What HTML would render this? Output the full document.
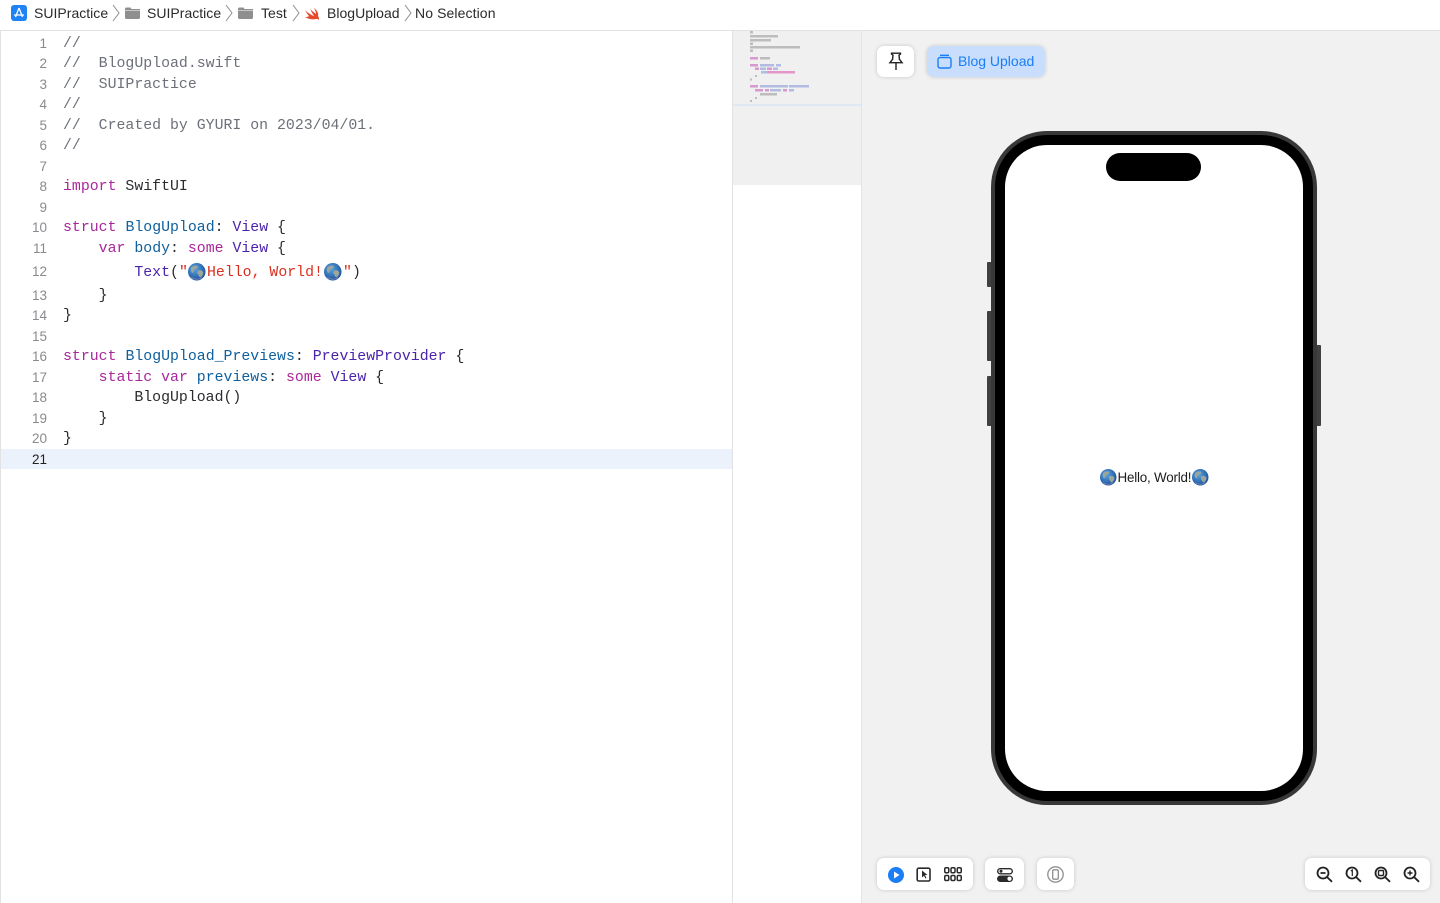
<!DOCTYPE html>
<html><head><meta charset="utf-8"><style>
html,body{margin:0;padding:0;width:1440px;height:903px;overflow:hidden;background:#fff}
body{position:relative;font-family:"Liberation Sans",sans-serif}
.a{position:absolute}
.bc{position:absolute;top:5px;font-size:14px;line-height:16px;color:#2a2a2a;white-space:nowrap;letter-spacing:.02px}
.ln{position:absolute;left:0;width:47px;text-align:right;font-size:13.5px;line-height:20px;color:#8b8b8f;margin-top:.6px}
.c{position:absolute;left:63px;font-family:"Liberation Mono",monospace;font-size:14.87px;line-height:20px;white-space:pre;color:#2c2c30}
.g{color:#6c7078}.k{color:#a9279a}.b{color:#0f5f9c}.v{color:#4a23ab}.r{color:#d8301f}
.btn{position:absolute;background:#fff;border-radius:7px;box-shadow:0 0 4px rgba(0,0,0,.17)}
svg{position:absolute;overflow:visible}
</style></head><body>
<svg width="0" height="0" style="position:absolute"><defs>
<radialGradient id="gl" cx=".4" cy=".35" r=".7"><stop offset="0" stop-color="#5ba6e2"/><stop offset="1" stop-color="#174c9a"/></radialGradient>
<g id="globe"><circle cx="8" cy="8" r="8" fill="url(#gl)"/><path d="M3 4c2-2 5-2 6-1 0 2-2 2-3 3s-1 3-2 3-2-3-1-5zM9 7c2-1 5 0 5 2s-2 4-3 4-1-2-2-3 0-2 0-3z" fill="#9aa79a"/><path d="M3 13c3 2.500 7 2.500 10 0" stroke="#6f80b0" fill="none"/></g>
</defs></svg>

<div class="a" style="left:0;top:0;width:1440px;height:30px;background:#fff;border-bottom:1px solid #e2e2e2"></div>
<div class="a" style="left:0;top:31px;width:1px;height:872px;background:#e2e2e2"></div>

<svg style="left:11px;top:5px" width="16" height="16" viewBox="0 0 16 16"><rect width="16" height="16" rx="3" fill="#1f82f5"/><path d="M8 3L4.500 12M8 3l3.500 9M3 10h10" stroke="#fff" stroke-width="1.300" fill="none"/></svg>
<div class="bc" style="left:34px">SUIPractice</div>
<svg style="left:112px;top:4px" width="8" height="18" viewBox="0 0 8 18"><path d="M1 1l6 8-6 8" stroke="#8d8d8d" fill="none"/></svg>
<svg style="left:125px;top:7px" width="15" height="12" viewBox="0 0 15 12"><path d="M0 2q0-1.500 1.500-1.500h4l1 1.500H15v8.500q0 1.500-1.500 1.500h-12Q0 12 0 10.500z" fill="#8f8f8f"/><rect y="3" width="15" height="1" fill="#c8c8c8"/></svg>
<div class="bc" style="left:147px">SUIPractice</div>
<svg style="left:225px;top:4px" width="8" height="18" viewBox="0 0 8 18"><path d="M1 1l6 8-6 8" stroke="#8d8d8d" fill="none"/></svg>
<svg style="left:238px;top:7px" width="15" height="12" viewBox="0 0 15 12"><path d="M0 2q0-1.500 1.500-1.500h4l1 1.500H15v8.500q0 1.500-1.500 1.500h-12Q0 12 0 10.500z" fill="#8f8f8f"/><rect y="3" width="15" height="1" fill="#c8c8c8"/></svg>
<div class="bc" style="left:261px">Test</div>
<svg style="left:292px;top:4px" width="8" height="18" viewBox="0 0 8 18"><path d="M1 1l6 8-6 8" stroke="#8d8d8d" fill="none"/></svg>
<svg style="left:305px;top:7px" width="15" height="14" viewBox="0 0 15 14"><path d="M0 3c3 3 6 5 9 6C7 6 6 4 5 2c2 2 5 4 6 5 0-2-1-4-2-6 3 2 5 6 4 8 1 1 1 3 1 4-1-1-2-1-3-1-3 1-8 0-11-2 1 0 3 0 4-1C3 8 1 5 0 3z" fill="#e5492f"/></svg>
<div class="bc" style="left:327px">BlogUpload</div>
<svg style="left:404px;top:4px" width="8" height="18" viewBox="0 0 8 18"><path d="M1 1l6 8-6 8" stroke="#8d8d8d" fill="none"/></svg>
<div class="bc" style="left:415px;letter-spacing:.1px">No Selection</div>

<div class="a" style="left:1px;top:449px;width:731px;height:20px;background:#ecf2fc"></div>

<div class="ln" style="top:33px">1</div><div class="c g" style="top:34px">//</div>
<div class="ln" style="top:53.500px">2</div><div class="c g" style="top:54px">//  BlogUpload.swift</div>
<div class="ln" style="top:74px">3</div><div class="c g" style="top:75px">//  SUIPractice</div>
<div class="ln" style="top:94.500px">4</div><div class="c g" style="top:95px">//</div>
<div class="ln" style="top:115px">5</div><div class="c g" style="top:116px">//  Created by GYURI on 2023/04/01.</div>
<div class="ln" style="top:135.500px">6</div><div class="c g" style="top:136px">//</div>
<div class="ln" style="top:156px">7</div>
<div class="ln" style="top:176.500px">8</div><div class="c" style="top:177px"><span class="k">import</span> SwiftUI</div>
<div class="ln" style="top:197px">9</div>
<div class="ln" style="top:217.500px">10</div><div class="c" style="top:218px"><span class="k">struct</span> <span class="b">BlogUpload</span>: <span class="v">View</span> {</div>
<div class="ln" style="top:238px">11</div><div class="c" style="top:239px">    <span class="k">var</span> <span class="b">body</span>: <span class="k">some</span> <span class="v">View</span> {</div>
<div class="ln" style="top:261px">12</div><div class="c" style="top:263px">        <span class="v">Text</span>(<span class="r">"</span></div>
<svg style="left:188px;top:263px" width="17.500" height="17.500" viewBox="0 0 16 16"><use href="#globe"/></svg>
<div class="c r" style="top:263px;left:207px">Hello, World!</div>
<svg style="left:324px;top:263px" width="17.500" height="17.500" viewBox="0 0 16 16"><use href="#globe"/></svg>
<div class="c r" style="top:263px;left:343px">"</div>
<div class="c" style="top:263px;left:352px">)</div>
<div class="ln" style="top:285px">13</div><div class="c" style="top:286px">    }</div>
<div class="ln" style="top:305.500px">14</div><div class="c" style="top:306px">}</div>
<div class="ln" style="top:326px">15</div>
<div class="ln" style="top:346.500px">16</div><div class="c" style="top:347px"><span class="k">struct</span> <span class="b">BlogUpload_Previews</span>: <span class="v">PreviewProvider</span> {</div>
<div class="ln" style="top:367px">17</div><div class="c" style="top:368px">    <span class="k">static</span> <span class="k">var</span> <span class="b">previews</span>: <span class="k">some</span> <span class="v">View</span> {</div>
<div class="ln" style="top:387.500px">18</div><div class="c" style="top:388px">        BlogUpload()</div>
<div class="ln" style="top:408px">19</div><div class="c" style="top:409px">    }</div>
<div class="ln" style="top:428.500px">20</div><div class="c" style="top:429px">}</div>
<div class="ln" style="top:449px;color:#222">21</div>

<!-- minimap -->
<div class="a" style="left:732px;top:31px;width:1px;height:872px;background:#e2e2e2"></div>
<div class="a" style="left:733px;top:31px;width:128px;height:154px;background:#f0f0f0"></div>
<div class="a" style="left:733px;top:104px;width:128px;height:2px;background:#dfe8f5"></div>
<svg style="left:745px;top:28px;filter:blur(.35px)" width="80" height="80">
<g fill="#bdbdbd">
<rect x="5" y="3" width="3" height="2.500"/><rect x="5" y="7" width="28" height="2.500"/><rect x="5" y="11" width="21" height="2.500"/><rect x="5" y="14.500" width="3" height="2.500"/><rect x="5" y="18" width="50" height="2.500"/><rect x="5" y="21.500" width="3" height="2.500"/>
<rect x="15" y="29" width="10" height="2.500"/><rect x="15" y="65" width="17" height="2.500"/>
<rect x="10" y="47" width="2" height="2"/><rect x="5" y="50.500" width="2" height="2"/><rect x="10" y="69" width="2" height="2"/><rect x="5" y="72" width="2" height="2"/>
</g>
<g fill="#d899cf">
<rect x="5" y="29" width="8" height="2.500"/><rect x="5" y="36" width="8" height="2.500"/><rect x="10" y="39.500" width="4" height="2.500"/><rect x="22" y="39.500" width="5" height="2.500"/><rect x="5" y="57" width="8" height="2.500"/><rect x="10" y="61" width="8" height="2.500"/><rect x="20" y="61" width="4" height="2.500"/><rect x="38" y="61" width="4" height="2.500"/>
</g>
<rect x="22" y="43" width="28" height="2.500" fill="#e596c8"/>
<g fill="#b2bbe2">
<rect x="15" y="36" width="14" height="2.500"/><rect x="31" y="36" width="5" height="2.500"/><rect x="15" y="39.500" width="6" height="2.500"/><rect x="28" y="39.500" width="5" height="2.500"/><rect x="16" y="43" width="6" height="2.500"/><rect x="15" y="57" width="28" height="2.500"/><rect x="44" y="57" width="20" height="2.500"/><rect x="25" y="61" width="11" height="2.500"/><rect x="44" y="61" width="5" height="2.500"/>
</g>
</svg>

<!-- preview panel -->
<div class="a" style="left:861px;top:31px;width:1px;height:872px;background:#e4e4e4"></div>
<div class="a" style="left:862px;top:31px;width:578px;height:872px;background:#f1f1f1"></div>

<div class="btn" style="left:877px;top:46px;width:37px;height:31px"></div>
<svg style="left:888px;top:52px" width="16" height="20" viewBox="0 0 16 20" fill="none" stroke="#222" stroke-width="1.400"><path d="M3.500 1.200h9v.8L11 3.200l.4 4 2.700 3.500H1.900l2.700-3.500.4-4L3.500 2zM8 10.700V18"/></svg>
<div class="btn" style="left:927px;top:46px;width:118px;height:31px;background:#c8defc"></div>
<svg style="left:937px;top:54px" width="15" height="15" viewBox="0 0 15 15" fill="none" stroke="#1c7ef5" stroke-width="1.400"><rect x="1" y="3.500" width="13" height="10.500" rx="2"/><path d="M3 1.300h9"/></svg>
<div class="a" style="left:958px;top:53px;font-size:14px;line-height:16px;color:#1a7ff5;white-space:nowrap">Blog Upload</div>

<!-- phone -->
<div class="a" style="left:987px;top:262px;width:6px;height:25px;background:#404040;border-radius:1px"></div>
<div class="a" style="left:987px;top:311px;width:6px;height:50px;background:#404040;border-radius:1px"></div>
<div class="a" style="left:987px;top:376px;width:6px;height:50px;background:#404040;border-radius:1px"></div>
<div class="a" style="left:1315px;top:345px;width:6px;height:81px;background:#404040;border-radius:1px"></div>
<div class="a" style="left:991px;top:131px;width:326px;height:674px;box-sizing:border-box;background:#000;border:4px solid #383838;border-radius:56px"></div>
<div class="a" style="left:1005px;top:145px;width:298px;height:646px;background:#fff;border-radius:42px"></div>
<div class="a" style="left:1106px;top:153px;width:95px;height:28px;background:#000;border-radius:14px"></div>
<svg style="left:1100px;top:469px" width="16.500" height="16.500" viewBox="0 0 16 16"><use href="#globe"/></svg>
<svg style="left:1191.500px;top:469px" width="16.500" height="16.500" viewBox="0 0 16 16"><use href="#globe"/></svg>
<div class="a" style="left:1117.500px;top:470px;font-size:13.400px;line-height:16px;color:#1c1c1c;white-space:nowrap;letter-spacing:-.2px">Hello, World!</div>

<!-- bottom toolbar -->
<div class="btn" style="left:877px;top:858px;width:96px;height:32px"></div>
<div class="btn" style="left:985px;top:858px;width:39px;height:32px"></div>
<div class="btn" style="left:1037px;top:858px;width:37px;height:32px"></div>
<div class="btn" style="left:1305px;top:858px;width:125px;height:32px"></div>

<svg style="left:888px;top:867px" width="16" height="16" viewBox="0 0 16 16"><circle cx="8" cy="8" r="8" fill="#1c7ef5"/><path d="M6 4.500v7l5.500-3.500z" fill="#fff"/></svg>
<svg style="left:916px;top:867px" width="16" height="15" viewBox="0 0 16 15" fill="none"><rect x="1.200" y="1.200" width="12.800" height="12.800" rx="1.500" stroke="#2a2a2a" stroke-width="1.600"/><path d="M6 3.500v7l2-1.800 1.500 2.800 1-.5L9 8h2.500z" fill="#2a2a2a"/></svg>
<svg style="left:944px;top:867px" width="18" height="15" viewBox="0 0 18 15" fill="none" stroke="#2a2a2a" stroke-width="1.500"><rect x=".75" y=".75" width="4" height="5" rx="1.300"/><rect x="7" y=".75" width="4" height="5" rx="1.300"/><rect x="13.250" y=".75" width="4" height="5" rx="1.300"/><rect x=".75" y="8.500" width="4" height="5" rx="1.300"/><rect x="7" y="8.500" width="4" height="5" rx="1.300"/><rect x="13.250" y="8.500" width="4" height="5" rx="1.300"/></svg>
<svg style="left:997px;top:868px" width="16" height="14" viewBox="0 0 16 14" fill="none"><rect x=".7" y=".7" width="14.600" height="5.100" rx="2.550" stroke="#2a2a2a" stroke-width="1.400"/><circle cx="4" cy="3.250" r="1.500" fill="#2a2a2a"/><rect y="7.500" width="16" height="6.500" rx="3.250" fill="#2a2a2a"/><circle cx="12.500" cy="10.750" r="2.100" fill="#fff"/></svg>
<svg style="left:1047px;top:866px" width="17" height="17" viewBox="0 0 17 17" fill="none" stroke="#8e8e8e" stroke-width="1.300"><circle cx="8.500" cy="8.500" r="7.700"/><rect x="5.700" y="3.800" width="5.600" height="9.400" rx="1.300"/></svg>

<svg style="left:1316px;top:866px" width="18" height="17" viewBox="0 0 18 17" fill="none" stroke="#222" stroke-width="1.800"><circle cx="7" cy="7" r="5.500"/><path d="M11 11l5 4.800M4.500 7h5"/></svg>
<svg style="left:1345px;top:866px" width="18" height="17" viewBox="0 0 18 17" fill="none" stroke="#222" stroke-width="1.800"><circle cx="7" cy="7" r="5.500"/><path d="M11 11l5 4.800"/><path d="M5.800 5l1.500-1v6" stroke-width="1.200"/></svg>
<svg style="left:1374px;top:866px" width="18" height="17" viewBox="0 0 18 17" fill="none" stroke="#222" stroke-width="1.800"><circle cx="7" cy="7" r="5.500"/><path d="M11 11l5 4.800"/><rect x="4.500" y="4.500" width="5" height="5" rx="1" stroke-width="1.400"/></svg>
<svg style="left:1403px;top:866px" width="18" height="17" viewBox="0 0 18 17" fill="none" stroke="#222" stroke-width="1.800"><circle cx="7" cy="7" r="5.500"/><path d="M11 11l5 4.800"/><path d="M4.500 7h5M7 4.500v5" stroke-width="1.400"/></svg>
</body></html>
